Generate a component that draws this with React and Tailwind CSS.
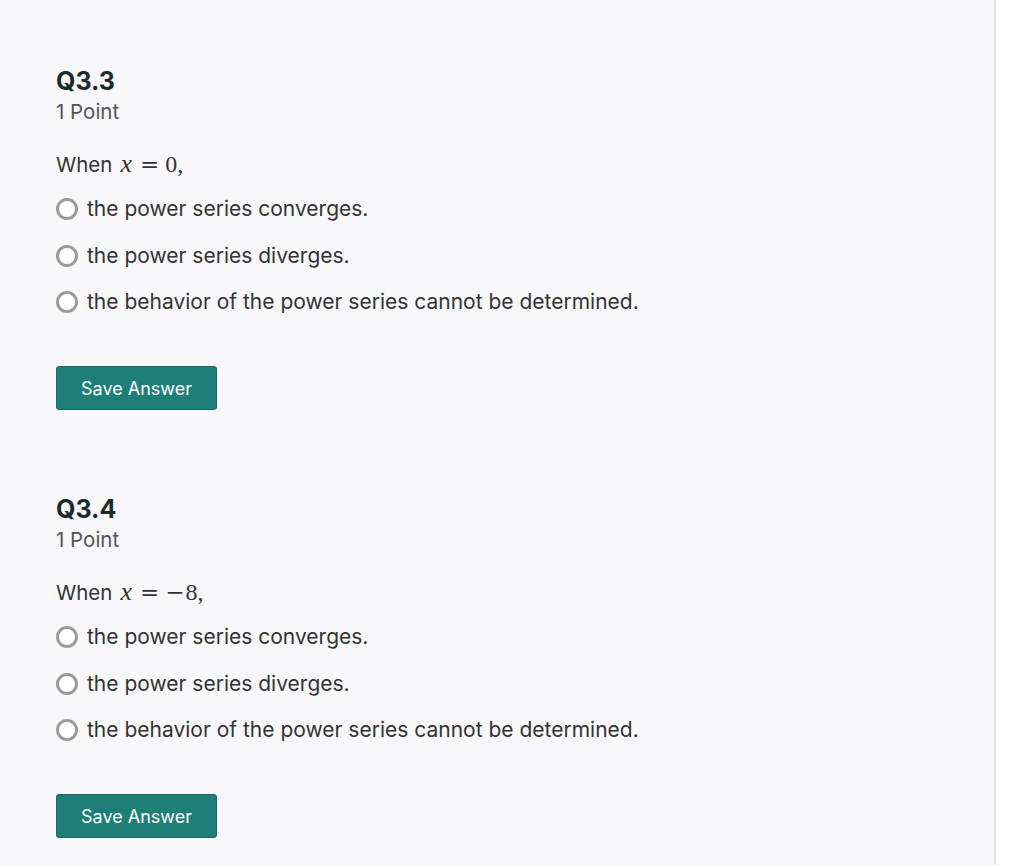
import React from "react";

function Radio() {
  return (
    <span className="block w-[22px] h-[22px] rounded-full border-[3px] border-[#9b9b9b] bg-white shrink-0" />
  );
}

const opts = [
  "the power series converges.",
  "the power series diverges.",
  "the behavior of the power series cannot be determined.",
];

function Question({ id, neg, num }) {
  return (
    <section>
      <h2 className="text-[25px] leading-[30px] font-bold text-[#1c2b2a]">{id}</h2>
      <div className="mt-[4px] text-[20.5px] leading-[24px] text-[#555]">1 Point</div>
      <div className="mt-[26px] text-[20.5px] leading-[28px] text-[#333] flex items-baseline">
        <span>When</span>
        <i className="ml-[8px] text-[26px] font-['Liberation_Serif',serif]">x</i>
        <span className="ml-[8px] mr-[6px] text-[23px] font-['DejaVu_Serif',serif]">=</span>
        {neg && <span className="mr-[1px] text-[23px] font-['DejaVu_Serif',serif]">{"\u2212"}</span>}
        <span className="text-[24px] font-['Liberation_Serif',serif]">{num},</span>
      </div>
      <div className="mt-[16px] flex flex-col gap-[18.5px]">
        {opts.map((o) => (
          <label key={o} className="flex items-center gap-[9px] h-[28px] text-[21px] text-[#333]">
            <Radio />
            <span>{o}</span>
          </label>
        ))}
      </div>
      <button className="mt-[50px] w-[161px] h-[44px] rounded-[3px] bg-[#1e7f78] border border-[#186b65] text-white text-[18px]">
        Save Answer
      </button>
    </section>
  );
}

export default function App() {
  return (
    <div className="w-[1024px] h-[865px] overflow-hidden bg-white flex font-[Inter]">
      <div className="w-[996px] h-full bg-[#f8f8fa] border-r-2 border-[#e5e5e7] pl-[56px] pt-[66px] flex flex-col gap-[84px]">
        <Question id="Q3.3" num="0" />
        <Question id="Q3.4" neg num="8" />
      </div>
    </div>
  );
}
